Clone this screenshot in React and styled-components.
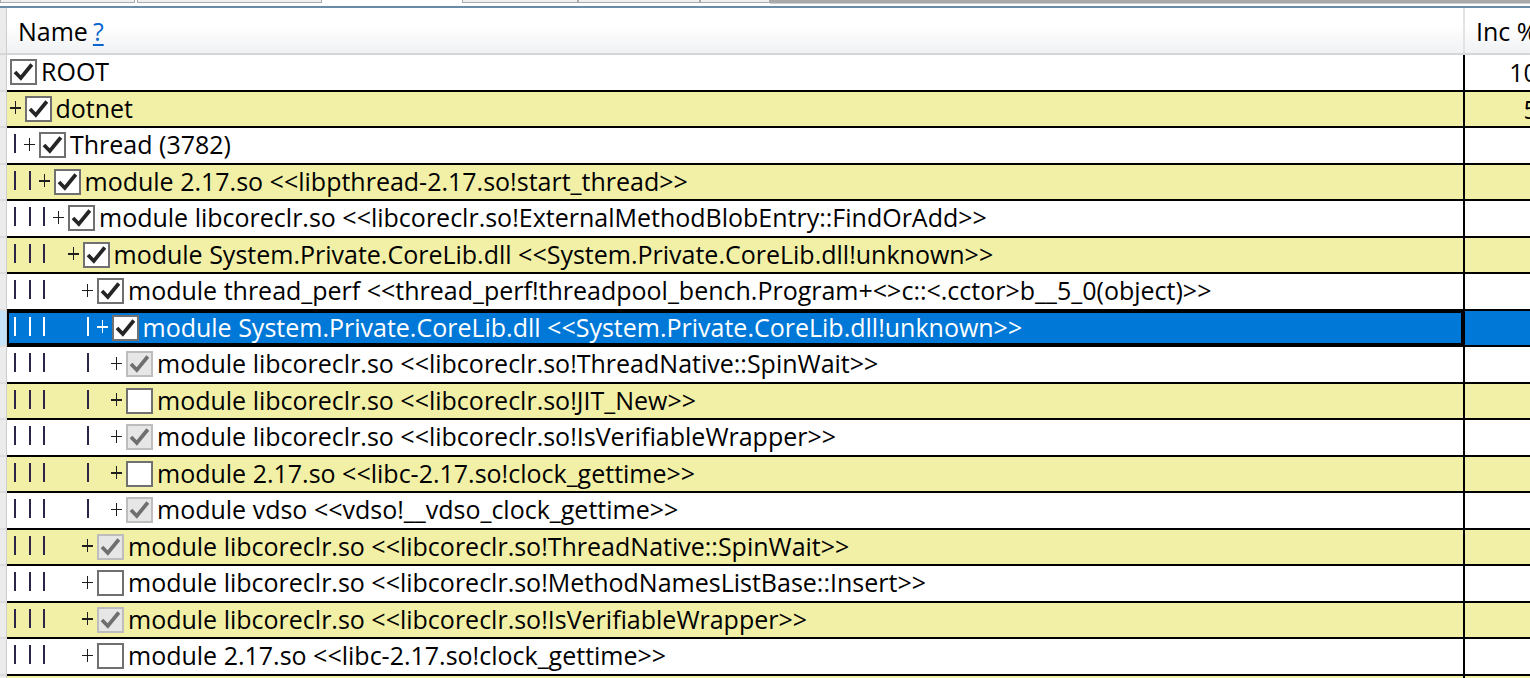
import React from "react";
import styled, { createGlobalStyle } from "styled-components";

const GlobalStyle = createGlobalStyle`
  html, body { margin: 0; padding: 0; background: #ffffff; }
  body { font-family: "Open Sans", "Noto Sans", sans-serif; overflow: hidden; }
`;

const Page = styled.div`
  width: 1530px;
  height: 678px;
  overflow: hidden;
  background: #ffffff;
  display: flex;
  flex-direction: column;
`;

const TabStrip = styled.div`
  height: 6px;
  display: flex;
  align-items: flex-start;
  flex: 0 0 auto;
`;

const TabStub = styled.div`
  flex: 0 0 ${(p) => p.$w}px;
  height: 3px;
  box-sizing: border-box;
  background: ${(p) => (p.$active ? "#ffffff" : "#efefef")};
  border: ${(p) => (p.$active ? "none" : "1px solid #ababab")};
  border-top: none;
`;

const TabFill = styled.div`
  flex: 1 1 auto;
  height: 3px;
  background: #a9a9a9;
  border-bottom: 1px solid #cfcfcf;
`;

const AccentLine = styled.div`
  height: 2px;
  flex: 0 0 auto;
  background: #6b8aa6;
`;

const HeaderRow = styled.div`
  display: flex;
  height: 47px;
  flex: 0 0 auto;
  box-sizing: border-box;
  border-bottom: 2px solid #d6d6d6;
`;

const RowHeader = styled.div`
  flex: 0 0 7px;
  box-sizing: border-box;
  background: ${(p) => (p.$selected ? "#c4e2f8" : "#ebebeb")};
  border-right: 1px solid #cdcdcd;
`;

const HeaderCell = styled.div`
  flex: 0 0 ${(p) => p.$w}px;
  box-sizing: border-box;
  display: flex;
  align-items: center;
  padding-left: 11px;
  background: linear-gradient(#ffffff 0%, #ffffff 40%, #f0f1f3 100%);
  border-right: ${(p) => (p.$divider ? "2px solid #e3e3e3" : "none")};
  font-size: 25px;
  color: #000;
  white-space: nowrap;
  overflow: hidden;
`;

const HelpLink = styled.a`
  color: #0a64d0;
  text-decoration: underline;
  text-underline-offset: 3px;
  text-decoration-thickness: 1.5px;
  margin-left: 5px;
  cursor: pointer;
`;

const Row = styled.div`
  display: flex;
  height: 36.5px;
  flex: 0 0 auto;
  box-sizing: border-box;
  border-bottom: 2px solid #000;
  background: ${(p) => (p.$selected ? "#0078d7" : p.$alt ? "#f2f0a7" : "#ffffff")};
  color: ${(p) => (p.$selected ? "#ffffff" : "#000000")};
`;

const RowHead = styled(RowHeader)`
  margin-bottom: -2px;
  border-bottom: 2px solid #dcdcdc;
`;

const NameCell = styled.div`
  flex: 0 0 1458px;
  box-sizing: border-box;
  display: flex;
  align-items: center;
  padding-left: 1px;
  border-right: 2px solid #000;
  box-shadow: ${(p) => (p.$focus ? "inset 0 0 0 2px #000" : "none")};
  white-space: nowrap;
  overflow: hidden;
`;

const Unit = styled.span`
  flex: 0 0 14.5px;
  height: 100%;
  display: flex;
  align-items: center;
  justify-content: center;
`;

const TreeBar = styled.span`
  width: 1.6px;
  height: 19px;
  margin-top: -3px;
  background: ${(p) => (p.$selected ? "#ffffff" : "#2c2548")};
`;

const Expander = styled.span`
  position: relative;
  width: 11px;
  height: 13px;
  margin-top: -2px;
  &::before,
  &::after {
    content: "";
    position: absolute;
    background: ${(p) => (p.$selected ? "#ffffff" : "#1e1e1e")};
  }
  &::before {
    left: 0;
    right: 0;
    top: 6px;
    height: 1.4px;
  }
  &::after {
    top: 0;
    bottom: 0;
    left: 4.8px;
    width: 1.4px;
  }
`;

const Box = styled.span`
  flex: 0 0 27px;
  height: 26px;
  box-sizing: border-box;
  margin-left: 2px;
  margin-right: 4px;
  display: flex;
  align-items: center;
  justify-content: center;
  background: ${(p) => (p.$state === "partial" ? "#e6e6e6" : "#ffffff")};
  border: 2px solid ${(p) => (p.$state === "partial" ? "#bdbdbd" : "#707070")};
`;

const Label = styled.span`
  font-size: 25px;
  line-height: 1;
  margin-top: -1px;
`;

const IncCell = styled.div`
  flex: 0 0 120px;
  box-sizing: border-box;
  display: flex;
  align-items: center;
  justify-content: flex-end;
  padding-right: 12px;
  font-size: 25px;
  white-space: nowrap;
`;

function CheckBox({ state }) {
  return (
    <Box $state={state}>
      {state !== "off" && (
        <svg width="23" height="22" viewBox="0 0 23 22">
          <path
            d="M3 11 L8.8 17 L19.8 3.5"
            fill="none"
            stroke={state === "partial" ? "#6f6f6f" : "#252525"}
            strokeWidth="3.7"
            strokeLinejoin="miter"
          />
        </svg>
      )}
    </Box>
  );
}

const B = "|";
const S = " ";
const P = "+";

const rows = [
  { u: [], cb: "on", name: "ROOT", inc: "100.0" },
  { u: [P], cb: "on", name: "dotnet", inc: "54.0" },
  { u: [B, P], cb: "on", name: "Thread (3782)", inc: "9.9" },
  { u: [B, B, P], cb: "on", name: "module 2.17.so <<libpthread-2.17.so!start_thread>>", inc: "9.9" },
  { u: [B, B, B, P], cb: "on", name: "module libcoreclr.so <<libcoreclr.so!ExternalMethodBlobEntry::FindOrAdd>>", inc: "9.9" },
  { u: [B, B, B, S, P], cb: "on", name: "module System.Private.CoreLib.dll <<System.Private.CoreLib.dll!unknown>>", inc: "9.9" },
  { u: [B, B, B, S, S, P], cb: "on", name: "module thread_perf <<thread_perf!threadpool_bench.Program+<>c::<.cctor>b__5_0(object)>>", inc: "9.9" },
  { u: [B, B, B, S, S, B, P], cb: "on", name: "module System.Private.CoreLib.dll <<System.Private.CoreLib.dll!unknown>>", inc: "9.8", selected: true },
  { u: [B, B, B, S, S, B, S, P], cb: "partial", name: "module libcoreclr.so <<libcoreclr.so!ThreadNative::SpinWait>>", inc: "5.1" },
  { u: [B, B, B, S, S, B, S, P], cb: "off", name: "module libcoreclr.so <<libcoreclr.so!JIT_New>>", inc: "0.4" },
  { u: [B, B, B, S, S, B, S, P], cb: "partial", name: "module libcoreclr.so <<libcoreclr.so!IsVerifiableWrapper>>", inc: "0.3" },
  { u: [B, B, B, S, S, B, S, P], cb: "off", name: "module 2.17.so <<libc-2.17.so!clock_gettime>>", inc: "0.2" },
  { u: [B, B, B, S, S, B, S, P], cb: "partial", name: "module vdso <<vdso!__vdso_clock_gettime>>", inc: "0.1" },
  { u: [B, B, B, S, S, P], cb: "partial", name: "module libcoreclr.so <<libcoreclr.so!ThreadNative::SpinWait>>", inc: "0.1" },
  { u: [B, B, B, S, S, P], cb: "off", name: "module libcoreclr.so <<libcoreclr.so!MethodNamesListBase::Insert>>", inc: "0.1" },
  { u: [B, B, B, S, S, P], cb: "partial", name: "module libcoreclr.so <<libcoreclr.so!IsVerifiableWrapper>>", inc: "0.1" },
  { u: [B, B, B, S, S, P], cb: "off", name: "module 2.17.so <<libc-2.17.so!clock_gettime>>", inc: "0.0" },
  { u: [B, B, B, S, S, P], cb: "off", name: "module vdso <<vdso!__vdso_clock_gettime>>", inc: "0.0" },
];

const tabs = [
  { w: 135 },
  { w: 2, gap: true },
  { w: 185 },
  { w: 140, active: true },
  { w: 116 },
  { w: 122 },
  { w: 70 },
];

export default function App() {
  return (
    <Page>
      <GlobalStyle />
      <TabStrip>
        {tabs.map((t, i) => (
          <TabStub key={i} $w={t.w} $active={t.active || t.gap} />
        ))}
        <TabFill />
      </TabStrip>
      <AccentLine />
      <HeaderRow>
        <RowHeader />
        <HeaderCell $w={1458} $divider>
          Name<HelpLink>?</HelpLink>
        </HeaderCell>
        <HeaderCell $w={120}>Inc %</HeaderCell>
      </HeaderRow>
      {rows.map((r, i) => (
        <Row key={i} $alt={i % 2 === 1} $selected={r.selected}>
          <RowHead $selected={r.selected} />
          <NameCell $focus={r.selected}>
            {r.u.map((k, j) => (
              <Unit key={j}>
                {k === B && <TreeBar $selected={r.selected} />}
                {k === P && <Expander $selected={r.selected} />}
              </Unit>
            ))}
            <CheckBox state={r.cb} />
            <Label>{r.name}</Label>
          </NameCell>
          <IncCell>{r.inc}</IncCell>
        </Row>
      ))}
    </Page>
  );
}
